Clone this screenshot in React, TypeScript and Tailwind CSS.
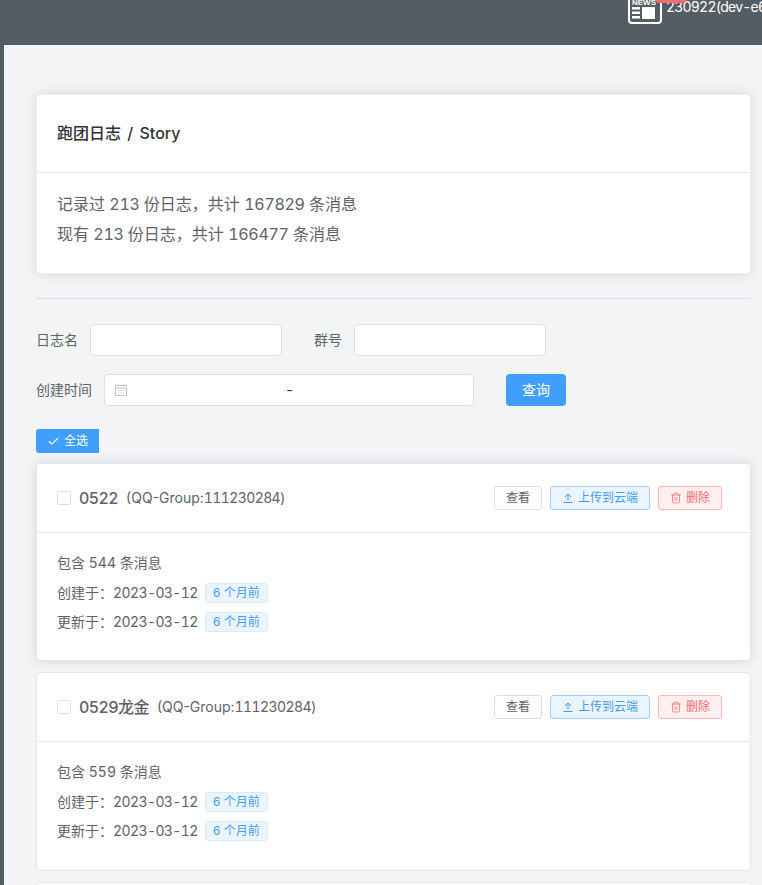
import { Check, Trash2 } from "lucide-react";

const font = "font-['Inter','Noto_Sans_CJK_SC',sans-serif] tabular-nums";

function NewsIcon() {
  return (
    <svg width="34" height="34" viewBox="0 0 34 34">
      <rect x="1" y="1" width="32" height="32" rx="3" fill="#545c64" stroke="#fff" strokeWidth="2" />
      <text x="4" y="15" fontSize="8" fontWeight="700" fill="#fff" fontFamily="Liberation Sans">
        NEWS
      </text>
      <rect x="14" y="17" width="13" height="12" fill="#fff" />
      <rect x="4" y="17" width="8" height="2.5" fill="#fff" />
      <rect x="4" y="21.5" width="8" height="2.5" fill="#fff" />
      <rect x="4" y="26" width="8" height="2.5" fill="#fff" />
    </svg>
  );
}

function CalendarIcon() {
  return (
    <svg width="14" height="14" viewBox="0 0 14 14" fill="none" stroke="#c0c4cc" strokeWidth="1">
      <rect x="1.5" y="2.5" width="11" height="10" />
      <path d="M1.5 5h11M4 1v2M10 1v2M4 7.5h1M6.5 7.5h1M9 7.5h1M4 10h1M6.5 10h1M9 10h1" />
    </svg>
  );
}

function UploadIcon() {
  return (
    <svg width="12" height="12" viewBox="0 0 12 12" fill="none" stroke="currentColor" strokeWidth="1">
      <path d="M6 2v6.5M3 5l3-3 3 3M1.5 10.5h9" />
    </svg>
  );
}

function StoryCard({ name, count, shadow }: { name: string; count: number; shadow?: boolean }) {
  return (
    <div
      className={`rounded border border-[#e4e7ed] bg-white ${
        shadow ? "h-[198px] shadow-[0_0_12px_rgba(0,0,0,0.12)]" : "h-[199px]"
      }`}
    >
      <div className="flex h-[69px] items-center border-b border-[#e4e7ed] pl-5 pr-7">
        <span className="h-3.5 w-3.5 rounded-[2px] border border-[#dcdfe6] bg-white" />
        <span className="ml-2 text-base font-medium tracking-[-0.6px] text-[#606266]">{name}</span>
        <span className="ml-2 text-sm text-[#606266]">
          <span className="normal-nums">(QQ-Group:</span>
          <span className="tracking-[-0.6px]">111230284</span>)
        </span>
        <div className="ml-auto flex gap-2 text-xs">
          <button className="flex h-6 w-12 items-center justify-center rounded-[3px] border border-[#dcdfe6] bg-white text-[#606266]">
            查看
          </button>
          <button className="flex h-6 w-[100px] items-center justify-center gap-1 rounded-[3px] border border-[#a0cfff] bg-[#ecf5ff] text-[#409eff]">
            <UploadIcon />
            上传到云端
          </button>
          <button className="flex h-6 w-16 items-center justify-center gap-1 rounded-[3px] border border-[#fab6b6] bg-[#fef0f0] text-[#f56c6c]">
            <Trash2 size={12} strokeWidth={1.5} />
            删除
          </button>
        </div>
      </div>
      <div className="px-5 pt-[15px] text-sm leading-[30px] text-[#606266]">
        <div className="h-[30px]">包含 {count} 条消息</div>
        {["创建于", "更新于"].map((label) => (
          <div key={label} className="flex h-[29px] items-center gap-[7px]">
            <span>
              {label}：<span className="tracking-[-0.6px]">2023-03-12</span>
            </span>
            <span className="flex h-5 items-center rounded-[3px] border border-[#d9ecff] bg-[#ecf5ff] px-[7px] text-xs text-[#409eff]">
              6 个月前
            </span>
          </div>
        ))}
      </div>
    </div>
  );
}

export default function App() {
  return (
    <div className={`h-[885px] w-[762px] overflow-hidden bg-[#f3f4f6] ${font}`}>
      <header className="relative flex h-[45px] justify-end overflow-hidden bg-[#545c64]">
        <div className="mt-[-10px] flex h-[34px] items-start">
          <NewsIcon />
        </div>
        <span className="absolute left-[655px] top-[-6px] h-[9px] w-8 rounded-full bg-[#f56c6c]" />
        <span className="ml-1 w-24 overflow-hidden whitespace-nowrap text-sm leading-[14px] tracking-[-0.8px] text-white">
          230922(dev-e6
        </span>
      </header>
      <div className="flex">
        <div className="h-[840px] w-1 shrink-0 bg-[#545c64]" />
        <main className="min-w-0 flex-1 pl-8 pr-[11px] pt-[49px]">
          <section className="h-[180px] rounded border border-[#ebeef5] bg-white shadow-[0_0_12px_rgba(0,0,0,0.12)]">
            <div className="flex h-[78px] items-center border-b border-[#e4e7ed] px-5 pb-0.5 text-base font-medium text-[#303133] [word-spacing:2px]">
              跑团日志 / Story
            </div>
            <div className="px-5 pt-4 text-base leading-[30px] text-[#606266]">
              <div>
                记录过 <span className="tracking-[-0.3px]">213</span> 份日志，共计{" "}
                <span className="tracking-[-0.3px]">167829</span> 条消息
              </div>
              <div>
                现有 <span className="tracking-[-0.3px]">213</span> 份日志，共计{" "}
                <span className="tracking-[-0.3px]">166477</span> 条消息
              </div>
            </div>
          </section>

          <div className="mt-6 border-t border-[#dcdfe6]" />

          <form className="mt-[25px] text-sm text-[#606266]">
            <div className="flex h-8 items-center">
              <label className="w-[54px]">日志名</label>
              <input className="h-8 w-48 rounded border border-[#dcdfe6] bg-white" />
              <label className="ml-8 w-10">群号</label>
              <input className="h-8 w-48 rounded border border-[#dcdfe6] bg-white" />
            </div>
            <div className="mt-[18px] flex h-8 items-center">
              <label className="w-[68px]">创建时间</label>
              <div className="flex h-8 w-[370px] items-center rounded border border-[#dcdfe6] bg-white pl-[9px]">
                <CalendarIcon />
                <span className="ml-[157px] text-[#303133]">-</span>
              </div>
              <button type="button" className="ml-8 h-8 w-[60px] rounded bg-[#409eff] text-white">
                查询
              </button>
            </div>
          </form>

          <button className="mt-[23px] flex h-6 w-16 items-center justify-center gap-1 rounded-l-[3px] border-r border-white bg-[#409eff] text-xs text-white">
            <Check size={13} strokeWidth={2} />
            全选
          </button>

          <div className="mt-2.5 flex flex-col gap-[11px]">
            <StoryCard name="0522" count={544} shadow />
            <StoryCard name="0529龙金" count={559} />
            <StoryCard name="0530" count={500} />
          </div>
        </main>
      </div>
    </div>
  );
}
